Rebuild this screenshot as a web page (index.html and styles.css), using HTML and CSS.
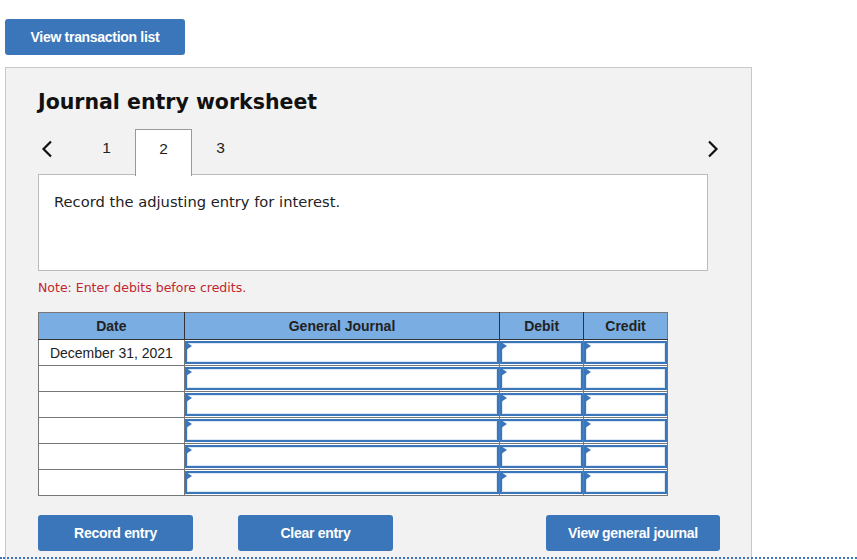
FILE: index.html
```html
<!DOCTYPE html>
<html lang="en">
<head>
  <meta charset="UTF-8" />
  <title>Journal entry worksheet</title>
  <link rel="stylesheet" href="styles.css">
</head>
<body>
  <button class="btn top-btn">View transaction list</button>

  <div class="panel">
    <h2 class="title">Journal entry worksheet</h2>

    <div class="tabs">
      <span class="arrow">
        <svg width="12" height="18" viewBox="0 0 12 18"><path d="M10 1.5 L2.5 9 L10 16.5" fill="none" stroke="#111" stroke-width="2.2"/></svg>
      </span>
      <span class="tab">1</span>
      <span class="tab active">2</span>
      <span class="tab">3</span>
      <span class="arrow next">
        <svg width="12" height="18" viewBox="0 0 12 18"><path d="M2 1.5 L9.5 9 L2 16.5" fill="none" stroke="#111" stroke-width="2.2"/></svg>
      </span>
    </div>

    <div class="task">Record the adjusting entry for interest.</div>
    <div class="note">Note: Enter debits before credits.</div>

    <table class="journal">
      <thead>
        <tr>
          <th class="c-date">Date</th>
          <th class="c-acct">General Journal</th>
          <th class="c-amt">Debit</th>
          <th class="c-amt">Credit</th>
        </tr>
      </thead>
      <tbody>
        <tr>
          <td class="date">December 31, 2021</td>
          <td class="cell"><span class="field"></span></td>
          <td class="cell"><span class="field"></span></td>
          <td class="cell"><span class="field"></span></td>
        </tr>
        <tr>
          <td class="date"></td>
          <td class="cell"><span class="field"></span></td>
          <td class="cell"><span class="field"></span></td>
          <td class="cell"><span class="field"></span></td>
        </tr>
        <tr>
          <td class="date"></td>
          <td class="cell"><span class="field"></span></td>
          <td class="cell"><span class="field"></span></td>
          <td class="cell"><span class="field"></span></td>
        </tr>
        <tr>
          <td class="date"></td>
          <td class="cell"><span class="field"></span></td>
          <td class="cell"><span class="field"></span></td>
          <td class="cell"><span class="field"></span></td>
        </tr>
        <tr>
          <td class="date"></td>
          <td class="cell"><span class="field"></span></td>
          <td class="cell"><span class="field"></span></td>
          <td class="cell"><span class="field"></span></td>
        </tr>
        <tr>
          <td class="date"></td>
          <td class="cell"><span class="field"></span></td>
          <td class="cell"><span class="field"></span></td>
          <td class="cell"><span class="field"></span></td>
        </tr>
      </tbody>
    </table>

    <div class="actions">
      <button class="btn record-btn">Record entry</button>
      <button class="btn clear-btn">Clear entry</button>
      <button class="btn view-btn">View general journal</button>
    </div>
  </div>

  <div class="dots"></div>
</body>
</html>
```

FILE: styles.css
```css
html {
  overflow: hidden;
}
body {
  margin: 0;
  padding: 19px 0 0 5px;
  box-sizing: border-box;
  background: #fff;
  font-family: "DejaVu Sans", Verdana, sans-serif;
  color: #222;
  height: 560px;
  overflow: hidden;
  position: relative;
}
.btn {
  background: #3a76b9;
  color: #fff;
  border: none;
  border-radius: 3px;
  font-family: "Liberation Sans", Arial, sans-serif;
  font-weight: bold;
  font-size: 14px;
  letter-spacing: -0.3px;
  height: 36px;
  cursor: pointer;
  padding: 0;
}
.top-btn {
  width: 180px;
  display: block;
}
.panel {
  margin-top: 12px;
  width: 747px;
  height: 520px;
  background: #f2f2f2;
  border: 1px solid #c8c8c8;
  padding: 0 0 0 32px;
  box-sizing: border-box;
}
.title {
  margin: 0;
  padding-top: 22px;
  font-size: 20.5px;
  font-weight: bold;
  color: #111;
  line-height: 24px;
}
.tabs {
  display: flex;
  align-items: stretch;
  margin-top: 15px;
  width: 681px;
  height: 46px;
  position: relative;
  z-index: 1;
}
.arrow {
  width: 40px;
  display: flex;
  align-items: center;
  padding-left: 3px;
  padding-bottom: 6px;
  box-sizing: border-box;
}
.arrow.next {
  margin-left: auto;
  width: auto;
  padding-left: 0;
}
.tab {
  width: 57px;
  display: flex;
  align-items: center;
  justify-content: center;
  padding-bottom: 9px;
  font-family: "Liberation Sans", Arial, sans-serif;
  font-size: 15.5px;
  color: #222;
  border: 1px solid transparent;
  border-bottom: none;
  box-sizing: border-box;
}
.tab.active {
  background: #fff;
  border-color: #999;
  height: 47px;
}
.task {
  width: 670px;
  height: 97px;
  box-sizing: border-box;
  background: #fff;
  border: 1px solid #bbb;
  margin-top: -1px;
  padding: 18px 15px;
  font-size: 14.7px;
  color: #222;
}
.note {
  color: #c1272d;
  font-size: 12.5px;
  margin-top: 9px;
  height: 15px;
}
.journal {
  margin-top: 17px;
  border-collapse: collapse;
  width: 630px;
  font-family: "Liberation Sans", Arial, sans-serif;
  font-size: 14px;
}
.journal th {
  background: #7aaee2;
  color: #222;
  height: 26px;
  padding: 0;
  border: 1px solid #333;
  border-top-color: #777;
}
.journal th:first-child {
  border-left-color: #777;
}
.journal th:last-child {
  border-right-color: #777;
}
.c-date { width: 145px; }
.c-acct { width: 315px; }
.c-amt { width: 83px; }
.journal td {
  background: #fff;
  border: 1px solid #777;
  padding: 0;
  line-height: 16px;
}
.journal td.date {
  height: 25px;
  text-align: center;
  color: #222;
}
.journal td.cell {
  padding: 1px 0 1px 0;
}
.field {
  display: block;
  height: 23px;
  box-sizing: border-box;
  border: 2px solid #3a76b9;
  box-shadow: inset 0 0 0 1px #dce8f5;
  background: #fff;
  position: relative;
}
.field::before {
  content: "";
  position: absolute;
  left: -1px;
  top: -1px;
  border-left: 6px solid #3a76b9;
  border-top: 4px solid transparent;
  border-bottom: 4px solid transparent;
}
.actions {
  display: flex;
  margin-top: 19px;
  width: 682px;
}
.record-btn, .clear-btn {
  width: 155px;
}
.clear-btn {
  margin-left: 45px;
}
.view-btn {
  width: 174px;
  margin-left: auto;
}
.dots {
  position: absolute;
  left: 0;
  right: 0;
  top: 557px;
  border-top: 2px dotted #3a76b9;
}
```
